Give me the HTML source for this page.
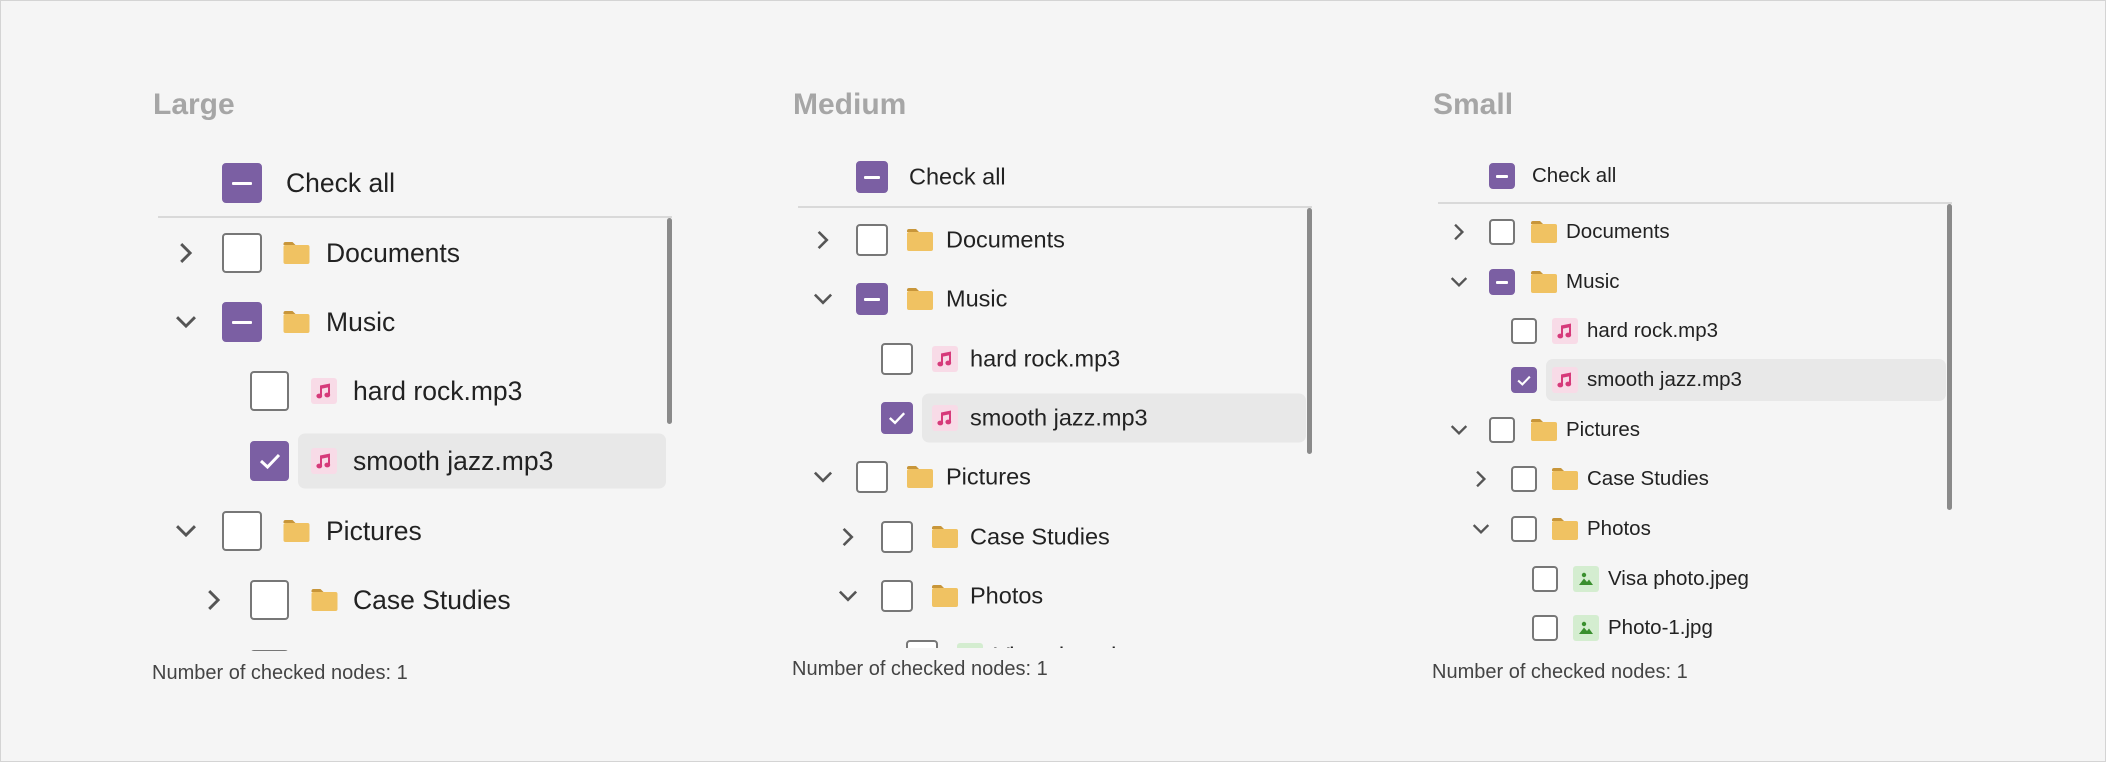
<!DOCTYPE html>
<html><head><meta charset="utf-8"><style>
*{margin:0;padding:0;box-sizing:border-box}
body{width:2106px;height:762px;background:#f5f5f5;position:relative;overflow:hidden;font-family:"Liberation Sans",sans-serif;color:#222}
.frame{position:absolute;left:0;top:0;width:2106px;height:762px;border:1px solid #d4d4d4}
.title{position:absolute;top:88px;font-weight:bold;font-size:30px;color:#a6a6a6}
.foot{position:absolute;font-size:20px;color:#444;line-height:24px}
.clip{position:absolute;left:0;width:2106px;overflow:hidden}
.row{position:absolute;left:0;width:2106px}
.row>*{position:absolute;top:50%;transform:translateY(-50%)}
.cb{background:#fff;border:2.5px solid #777;border-radius:4px}
.cb.on{background:#7b5fa3;border-color:#7b5fa3;display:flex;align-items:center;justify-content:center}
.dash{background:#fff;height:3px;border-radius:1px}
.sel{background:#e8e8e8;border-radius:7px}
.t{white-space:nowrap;line-height:1}
.sep{position:absolute;height:2px;background:#d9d9d9}
.sb{position:absolute;width:5px;background:#8a8a8a;border-radius:3px}
</style></head><body>
<div class="frame"></div>
<svg width="0" height="0" style="position:absolute">
<defs>
<symbol id="cr" viewBox="0 0 16 16"><path d="M4.5 1.5 L11 8 L4.5 14.5" fill="none" stroke="#555" stroke-width="2.1"/></symbol>
<symbol id="cd" viewBox="0 0 16 16"><path d="M1.5 4.5 L8 11 L14.5 4.5" fill="none" stroke="#555" stroke-width="2.1"/></symbol>
<symbol id="fo" viewBox="0 0 26 22"><path d="M0 2a2 2 0 0 1 2-2h7l3 3H0z" fill="#c8963a"/><rect x="0" y="3" width="26" height="19" rx="2" fill="#f0c262"/></symbol>
<symbol id="mu" viewBox="0 0 26 26"><rect width="26" height="26" rx="3" fill="#f8dbe7"/><path d="M9 7.5 L19 5.5 V9 L11 10.6 V18 H9z M17 7 H19 V17 H17z" fill="#d63a7a"/><ellipse cx="8.3" cy="18" rx="2.9" ry="2.4" fill="#d63a7a"/><ellipse cx="16.3" cy="17" rx="2.9" ry="2.4" fill="#d63a7a"/></symbol>
<symbol id="im" viewBox="0 0 26 26"><rect width="26" height="26" rx="3" fill="#d4edd0"/><circle cx="11" cy="9" r="2.2" fill="#3a8f2e"/><path d="M6 19 L11 12.5 L14 16 L16 13.5 L20 19z" fill="#3a8f2e"/></symbol>
</defs></svg>

<!-- LARGE -->
<div class="title" style="left:153px">Large</div>
<div class="row" style="top:163px;height:40px">
 <div class="cb on" style="left:222px;width:40px;height:40px"><div class="dash" style="width:20px"></div></div>
 <div class="t" style="left:286px;font-size:26.5px">Check all</div>
</div>
<div class="sep" style="left:158px;width:514px;top:216px"></div>
<div class="sb" style="left:667px;top:218px;height:206px"></div>
<div class="clip" style="top:218px;height:433px">
 <div class="row" style="top:0px;height:70px">
  <svg style="left:175px" width="22" height="22"><use href="#cr"/></svg>
  <div class="cb" style="left:222px;width:40px;height:40px"></div>
  <svg style="left:283px" width="27" height="22"><use href="#fo"/></svg>
  <div class="t" style="left:326px;font-size:26.5px">Documents</div>
 </div>
 <div class="row" style="top:69px;height:70px">
  <svg style="left:175px" width="22" height="22"><use href="#cd"/></svg>
  <div class="cb on" style="left:222px;width:40px;height:40px"><div class="dash" style="width:20px"></div></div>
  <svg style="left:283px" width="27" height="22"><use href="#fo"/></svg>
  <div class="t" style="left:326px;font-size:26.5px">Music</div>
 </div>
 <div class="row" style="top:138px;height:70px">
  <div class="cb" style="left:250px;width:39px;height:40px"></div>
  <svg style="left:311px" width="26" height="26"><use href="#mu"/></svg>
  <div class="t" style="left:353px;font-size:26.5px">hard rock.mp3</div>
 </div>
 <div class="row" style="top:208px;height:70px">
  <div class="sel" style="left:298px;width:368px;height:55px"></div>
  <div class="cb on" style="left:250px;width:39px;height:40px"><svg width="24" height="20" viewBox="0 0 24 20"><path d="M3 10 L9.5 16 L21 4" fill="none" stroke="#fff" stroke-width="3"/></svg></div>
  <svg style="left:311px" width="26" height="26"><use href="#mu"/></svg>
  <div class="t" style="left:353px;font-size:26.5px">smooth jazz.mp3</div>
 </div>
 <div class="row" style="top:278px;height:70px">
  <svg style="left:175px" width="22" height="22"><use href="#cd"/></svg>
  <div class="cb" style="left:222px;width:40px;height:40px"></div>
  <svg style="left:283px" width="27" height="22"><use href="#fo"/></svg>
  <div class="t" style="left:326px;font-size:26.5px">Pictures</div>
 </div>
 <div class="row" style="top:347px;height:70px">
  <svg style="left:203px" width="22" height="22"><use href="#cr"/></svg>
  <div class="cb" style="left:250px;width:39px;height:40px"></div>
  <svg style="left:311px" width="27" height="22"><use href="#fo"/></svg>
  <div class="t" style="left:353px;font-size:26.5px">Case Studies</div>
 </div>
 <div class="row" style="top:417px;height:70px">
  <svg style="left:203px" width="22" height="22"><use href="#cd"/></svg>
  <div class="cb" style="left:250px;width:39px;height:40px"></div>
  <svg style="left:311px" width="27" height="22"><use href="#fo"/></svg>
  <div class="t" style="left:353px;font-size:26.5px">Photos</div>
 </div>
</div>
<div class="foot" style="left:152px;top:661px">Number of checked nodes: 1</div>

<!-- MEDIUM -->
<div class="title" style="left:793px">Medium</div>
<div class="row" style="top:161px;height:32px">
 <div class="cb on" style="left:856px;width:32px;height:32px"><div class="dash" style="width:16px"></div></div>
 <div class="t" style="left:909px;font-size:23.5px">Check all</div>
</div>
<div class="sep" style="left:798px;width:514px;top:206px"></div>
<div class="sb" style="left:1307px;top:208px;height:246px"></div>
<div class="clip" style="top:208px;height:440px">
 <div class="row" style="top:2px;height:60px">
  <svg style="left:813px" width="20" height="20"><use href="#cr"/></svg>
  <div class="cb" style="left:856px;width:32px;height:32px"></div>
  <svg style="left:907px" width="26" height="22"><use href="#fo"/></svg>
  <div class="t" style="left:946px;font-size:23.5px">Documents</div>
 </div>
 <div class="row" style="top:61px;height:60px">
  <svg style="left:813px" width="20" height="20"><use href="#cd"/></svg>
  <div class="cb on" style="left:856px;width:32px;height:32px"><div class="dash" style="width:16px"></div></div>
  <svg style="left:907px" width="26" height="22"><use href="#fo"/></svg>
  <div class="t" style="left:946px;font-size:23.5px">Music</div>
 </div>
 <div class="row" style="top:121px;height:60px">
  <div class="cb" style="left:881px;width:32px;height:32px"></div>
  <svg style="left:932px" width="26" height="26"><use href="#mu"/></svg>
  <div class="t" style="left:970px;font-size:23.5px">hard rock.mp3</div>
 </div>
 <div class="row" style="top:180px;height:60px">
  <div class="sel" style="left:922px;width:384px;height:49px"></div>
  <div class="cb on" style="left:881px;width:32px;height:32px"><svg width="20" height="16" viewBox="0 0 24 20"><path d="M3 10 L9.5 16 L21 4" fill="none" stroke="#fff" stroke-width="3"/></svg></div>
  <svg style="left:932px" width="26" height="26"><use href="#mu"/></svg>
  <div class="t" style="left:970px;font-size:23.5px">smooth jazz.mp3</div>
 </div>
 <div class="row" style="top:239px;height:60px">
  <svg style="left:813px" width="20" height="20"><use href="#cd"/></svg>
  <div class="cb" style="left:856px;width:32px;height:32px"></div>
  <svg style="left:907px" width="26" height="22"><use href="#fo"/></svg>
  <div class="t" style="left:946px;font-size:23.5px">Pictures</div>
 </div>
 <div class="row" style="top:299px;height:60px">
  <svg style="left:838px" width="20" height="20"><use href="#cr"/></svg>
  <div class="cb" style="left:881px;width:32px;height:32px"></div>
  <svg style="left:932px" width="26" height="22"><use href="#fo"/></svg>
  <div class="t" style="left:970px;font-size:23.5px">Case Studies</div>
 </div>
 <div class="row" style="top:358px;height:60px">
  <svg style="left:838px" width="20" height="20"><use href="#cd"/></svg>
  <div class="cb" style="left:881px;width:32px;height:32px"></div>
  <svg style="left:932px" width="26" height="22"><use href="#fo"/></svg>
  <div class="t" style="left:970px;font-size:23.5px">Photos</div>
 </div>
 <div class="row" style="top:418px;height:60px">
  <div class="cb" style="left:906px;width:32px;height:32px"></div>
  <svg style="left:957px" width="26" height="26"><use href="#im"/></svg>
  <div class="t" style="left:994px;font-size:23.5px">Visa photo.jpeg</div>
 </div>
</div>
<div class="foot" style="left:792px;top:657px">Number of checked nodes: 1</div>

<!-- SMALL -->
<div class="title" style="left:1433px">Small</div>
<div class="row" style="top:163px;height:26px">
 <div class="cb on" style="left:1489px;width:26px;height:26px;border-radius:4px"><div class="dash" style="width:12px"></div></div>
 <div class="t" style="left:1532px;font-size:20.5px">Check all</div>
</div>
<div class="sep" style="left:1438px;width:514px;top:202px"></div>
<div class="sb" style="left:1947px;top:204px;height:306px"></div>
<div class="clip" style="top:204px;height:452px">
 <div class="row" style="top:3px;height:50px">
  <svg style="left:1450px" width="18" height="18"><use href="#cr"/></svg>
  <div class="cb" style="left:1489px;width:26px;height:26px"></div>
  <svg style="left:1531px" width="26" height="22"><use href="#fo"/></svg>
  <div class="t" style="left:1566px;font-size:20.5px">Documents</div>
 </div>
 <div class="row" style="top:53px;height:50px">
  <svg style="left:1450px" width="18" height="18"><use href="#cd"/></svg>
  <div class="cb on" style="left:1489px;width:26px;height:26px"><div class="dash" style="width:12px"></div></div>
  <svg style="left:1531px" width="26" height="22"><use href="#fo"/></svg>
  <div class="t" style="left:1566px;font-size:20.5px">Music</div>
 </div>
 <div class="row" style="top:102px;height:50px">
  <div class="cb" style="left:1511px;width:26px;height:26px"></div>
  <svg style="left:1552px" width="26" height="26"><use href="#mu"/></svg>
  <div class="t" style="left:1587px;font-size:20.5px">hard rock.mp3</div>
 </div>
 <div class="row" style="top:151px;height:50px">
  <div class="sel" style="left:1546px;width:400px;height:42px"></div>
  <div class="cb on" style="left:1511px;width:26px;height:26px"><svg width="16" height="13" viewBox="0 0 24 20"><path d="M3 10 L9.5 16 L21 4" fill="none" stroke="#fff" stroke-width="3.2"/></svg></div>
  <svg style="left:1552px" width="26" height="26"><use href="#mu"/></svg>
  <div class="t" style="left:1587px;font-size:20.5px">smooth jazz.mp3</div>
 </div>
 <div class="row" style="top:201px;height:50px">
  <svg style="left:1450px" width="18" height="18"><use href="#cd"/></svg>
  <div class="cb" style="left:1489px;width:26px;height:26px"></div>
  <svg style="left:1531px" width="26" height="22"><use href="#fo"/></svg>
  <div class="t" style="left:1566px;font-size:20.5px">Pictures</div>
 </div>
 <div class="row" style="top:250px;height:50px">
  <svg style="left:1472px" width="18" height="18"><use href="#cr"/></svg>
  <div class="cb" style="left:1511px;width:26px;height:26px"></div>
  <svg style="left:1552px" width="26" height="22"><use href="#fo"/></svg>
  <div class="t" style="left:1587px;font-size:20.5px">Case Studies</div>
 </div>
 <div class="row" style="top:300px;height:50px">
  <svg style="left:1472px" width="18" height="18"><use href="#cd"/></svg>
  <div class="cb" style="left:1511px;width:26px;height:26px"></div>
  <svg style="left:1552px" width="26" height="22"><use href="#fo"/></svg>
  <div class="t" style="left:1587px;font-size:20.5px">Photos</div>
 </div>
 <div class="row" style="top:350px;height:50px">
  <div class="cb" style="left:1532px;width:26px;height:26px"></div>
  <svg style="left:1573px" width="26" height="26"><use href="#im"/></svg>
  <div class="t" style="left:1608px;font-size:20.5px">Visa photo.jpeg</div>
 </div>
 <div class="row" style="top:399px;height:50px">
  <div class="cb" style="left:1532px;width:26px;height:26px"></div>
  <svg style="left:1573px" width="26" height="26"><use href="#im"/></svg>
  <div class="t" style="left:1608px;font-size:20.5px">Photo-1.jpg</div>
 </div>
</div>
<div class="foot" style="left:1432px;top:660px">Number of checked nodes: 1</div>
</body></html>
